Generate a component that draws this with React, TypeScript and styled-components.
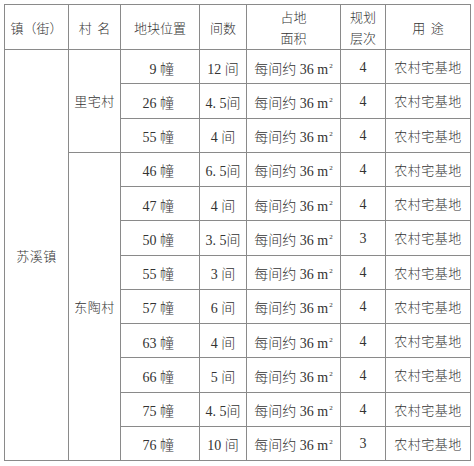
import React from 'react';
import styled, { createGlobalStyle } from 'styled-components';

const GlobalStyle = createGlobalStyle`
  html, body {
    margin: 0;
    padding: 0;
    background: #ffffff;
  }
  body {
    font-family: "Liberation Serif", "Noto Sans CJK SC", serif;
    color: #333333;
  }
`;

interface PlotRow {
  plot: string;
  rooms: string;
  levels: string;
}

const liZhai: PlotRow[] = [
  { plot: '9 幢', rooms: '12 间', levels: '4' },
  { plot: '26 幢', rooms: '4. 5间', levels: '4' },
  { plot: '55 幢', rooms: '4 间', levels: '4' },
];

const dongTao: PlotRow[] = [
  { plot: '46 幢', rooms: '6. 5间', levels: '4' },
  { plot: '47 幢', rooms: '4 间', levels: '4' },
  { plot: '50 幢', rooms: '3. 5间', levels: '3' },
  { plot: '55 幢', rooms: '3 间', levels: '4' },
  { plot: '57 幢', rooms: '6 间', levels: '4' },
  { plot: '63 幢', rooms: '4 间', levels: '4' },
  { plot: '66 幢', rooms: '5 间', levels: '4' },
  { plot: '75 幢', rooms: '4. 5间', levels: '4' },
  { plot: '76 幢', rooms: '10 间', levels: '3' },
];

const colWidths = [64, 52, 79, 47, 94, 45, 85];

const App: React.FC = () => {
  const total = liZhai.length + dongTao.length;

  const renderRow = (row: PlotRow, idx: number, village: string, span: number, first: boolean) => (
    <BodyRow key={village + idx}>
      {first && village === '里宅村' && (
        <TextCell rowSpan={total}>苏溪镇</TextCell>
      )}
      {idx === 0 && <TextCell rowSpan={span}>{village}</TextCell>}
      <PlotCell>{row.plot}</PlotCell>
      <NumCell>{row.rooms}</NumCell>
      <NumCell>
        每间约 36 m<Sup>2</Sup>
      </NumCell>
      <NumCell>{row.levels}</NumCell>
      <TextCell>农村宅基地</TextCell>
    </BodyRow>
  );

  return (
    <>
      <GlobalStyle />
      <Page>
        <Table>
          <colgroup>
            {colWidths.map((w, i) => (
              <col key={i} style={{ width: w }} />
            ))}
          </colgroup>
          <thead>
            <HeadRow>
              <HeadCell>镇（街）</HeadCell>
              <HeadCell>村&nbsp;&nbsp;名</HeadCell>
              <HeadCell>地块位置</HeadCell>
              <HeadCell>间数</HeadCell>
              <HeadCell>
                占地
                <br />
                面积
              </HeadCell>
              <HeadCell>
                规划
                <br />
                层次
              </HeadCell>
              <HeadCell>用&nbsp;&nbsp;途</HeadCell>
            </HeadRow>
          </thead>
          <tbody>
            {liZhai.map((r, i) => renderRow(r, i, '里宅村', liZhai.length, i === 0))}
            {dongTao.map((r, i) => renderRow(r, i, '东陶村', dongTao.length, false))}
          </tbody>
        </Table>
      </Page>
    </>
  );
};

const Page = styled.div`
  padding: 4px;
`;

const Table = styled.table`
  width: 466px;
  table-layout: fixed;
  border-collapse: collapse;
  font-size: 14px;
`;

const HeadRow = styled.tr`
  height: 45px;
`;

const BodyRow = styled.tr`
  height: 34.25px;
`;

const HeadCell = styled.th`
  border: 1px solid #8a8a8a;
  padding: 0;
  font-size: 13px;
  font-weight: 300;
  line-height: 21px;
  text-align: center;
  vertical-align: middle;
  font-family: "Noto Sans CJK SC", serif;
`;

const TextCell = styled.td`
  border: 1px solid #8a8a8a;
  padding: 0;
  font-size: 13px;
  text-align: center;
  vertical-align: middle;
  font-family: "Noto Sans CJK SC", serif;
  font-weight: 300;
  letter-spacing: 0.5px;
`;

const NumCell = styled.td`
  border: 1px solid #8a8a8a;
  padding: 2px 0 0;
  text-align: center;
  vertical-align: middle;
  white-space: nowrap;
  font-weight: 300;
`;

const PlotCell = styled(NumCell)`
  text-align: right;
  padding-right: 25px;
`;

const Sup = styled.sup`
  font-size: 7px;
  vertical-align: 6px;
  line-height: 0;
  margin-left: 1px;
`;

export default App;
